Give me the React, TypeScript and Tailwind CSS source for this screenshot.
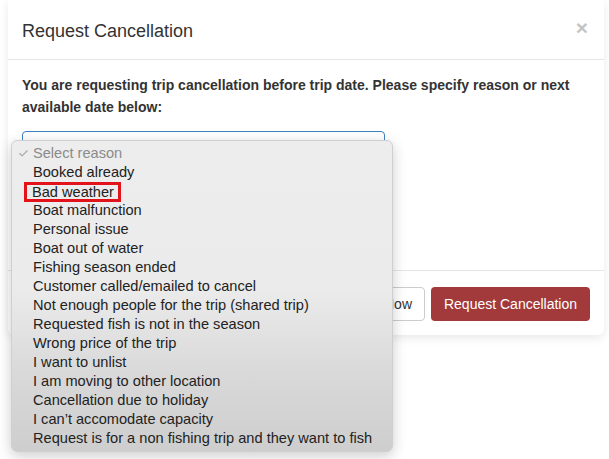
import { Check } from "lucide-react"

const reasons = [
  "Booked already",
  "Bad weather",
  "Boat malfunction",
  "Personal issue",
  "Boat out of water",
  "Fishing season ended",
  "Customer called/emailed to cancel",
  "Not enough people for the trip (shared trip)",
  "Requested fish is not in the season",
  "Wrong price of the trip",
  "I want to unlist",
  "I am moving to other location",
  "Cancellation due to holiday",
  "I can’t accomodate capacity",
  "Request is for a non fishing trip and they want to fish",
]

export default function App() {
  return (
    <div className="relative h-[459px] w-[609px] overflow-hidden bg-white font-['Liberation_Sans',Arial,sans-serif] text-[#333]">
      <div className="ml-[8px] w-[596px] rounded-b-[6px] bg-white shadow-[0_3px_10px_rgba(0,0,0,0.09)]">
        <div className="flex h-[60px] items-center justify-between border-b border-[#e5e5e5] pr-[16px] pl-[14px]">
          <h4 className="pt-[3px] text-[18px] text-[#333]">Request Cancellation</h4>
          <span className="-mt-[4px] text-[21px] leading-none font-bold text-[#c4c4c4]">×</span>
        </div>

        <div className="h-[210px] px-[14px] pt-[14px]">
          <p className="text-[14px] leading-[22px] font-bold text-[#333]">
            You are requesting trip cancellation before trip date. Please specify reason or next
            available date below:
          </p>
          <div className="mt-[13px] h-[34px] w-[363px] rounded-[4px] border border-[#3f80c2] bg-white" />
        </div>

        <div className="flex items-center justify-end gap-[6px] border-t border-[#e5e5e5] pt-[16px] pr-[14px] pb-[14px]">
          <button className="h-[34px] rounded-[4px] border border-[#ccc] bg-white px-[12px] text-[14px] text-[#333]">
            Reschedule Now
          </button>
          <button className="h-[34px] w-[159px] rounded-[4px] bg-[#a23a3b] text-[14px] text-white">
            Request Cancellation
          </button>
        </div>
      </div>

      <div className="absolute top-[140px] left-[11px] h-[312px] w-[382px] rounded-[6px] border border-[#cfcfcf] bg-[linear-gradient(to_bottom,#ededed_0%,#ebebeb_48%,#d9d9d9_75%,#cecece_100%)] pt-[3px] shadow-[0_4px_14px_rgba(0,0,0,0.2)]">
        <div className="flex h-[19px] items-center text-[14.6px] text-[#8a8a8a]">
          <Check size={11} strokeWidth={2.4} className="mr-[4px] ml-[6px] text-[#a8a8a8]" />
          Select reason
        </div>
        {reasons.map((r) => (
          <div key={r} className="flex h-[19px] items-center pl-[21px] text-[14.6px] text-[#222]">
            {r === "Bad weather" ? (
              <span className="-ml-[9px] border-[3px] border-[#e3131b] pr-[4px] pl-[5px] leading-[14px]">{r}</span>
            ) : (
              r
            )}
          </div>
        ))}
      </div>
    </div>
  )
}
